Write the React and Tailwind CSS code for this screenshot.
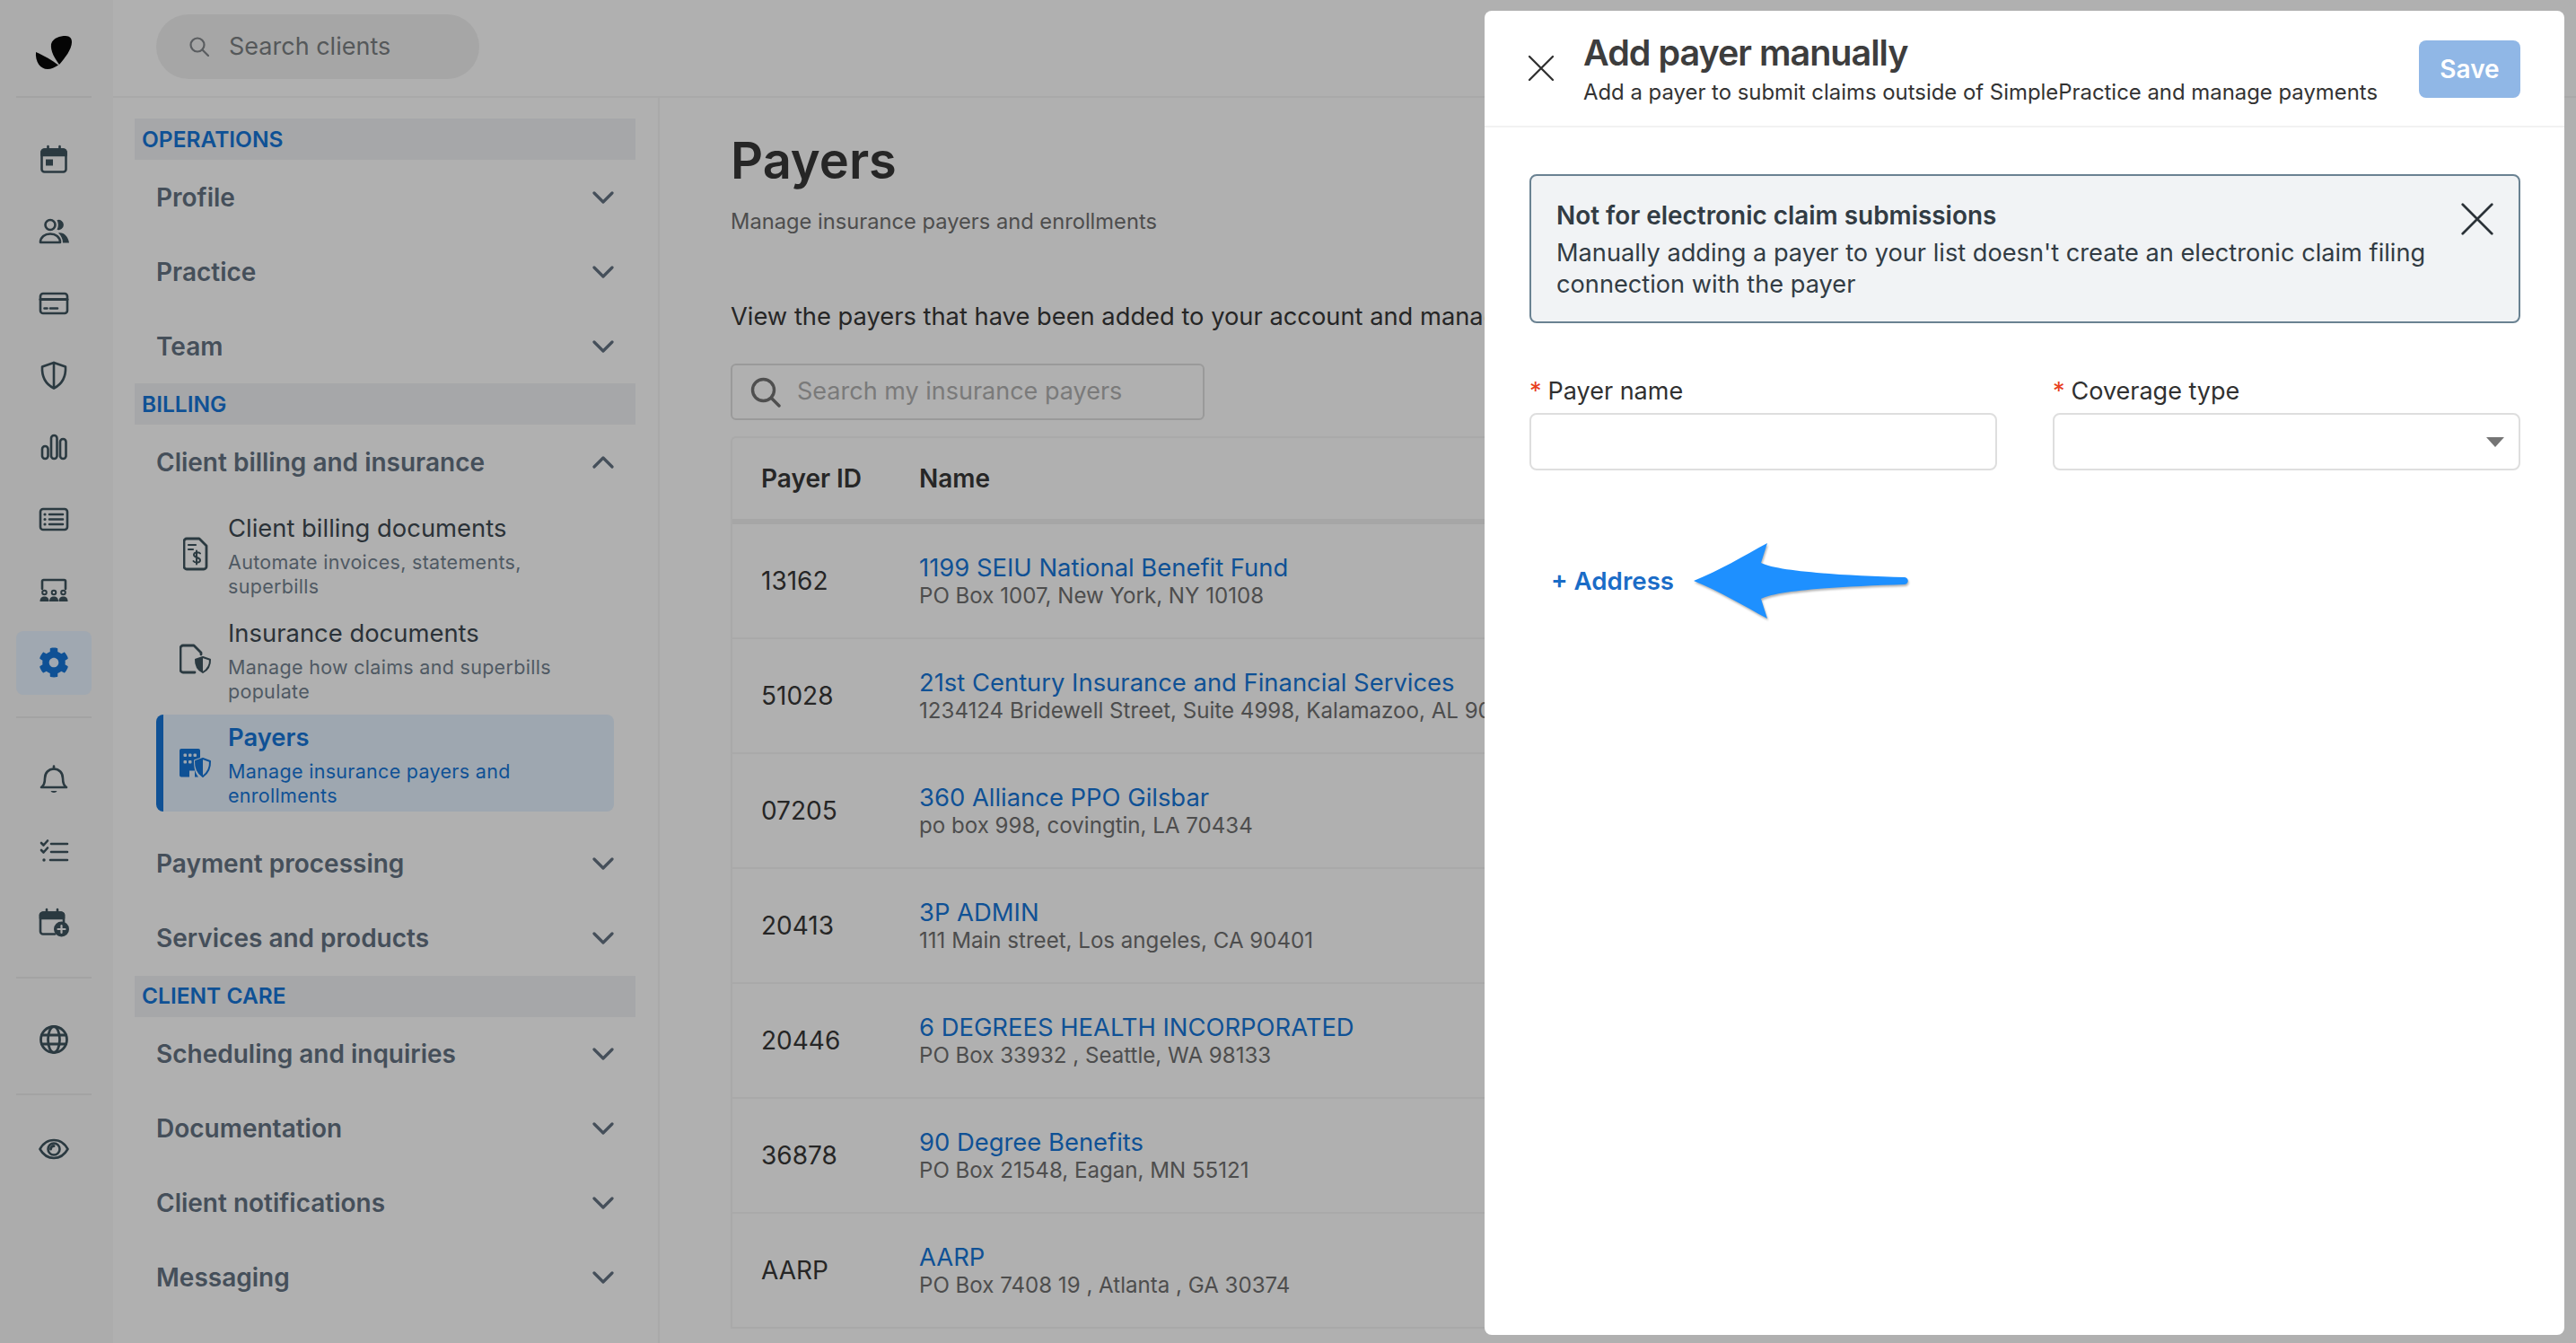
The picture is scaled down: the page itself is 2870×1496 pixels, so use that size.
import React from "react";
import { FaCog } from "react-icons/fa";

const ink = "#2b3a41";

function Chevron({ up }) {
  return (
    <svg width="24" height="16" viewBox="0 0 24 16" fill="none" stroke="#454f5a" strokeWidth="3.2" strokeLinecap="round" strokeLinejoin="round" className={up ? "rotate-180" : ""}>
      <path d="M2 3l10 10L22 3" />
    </svg>
  );
}

const iconProps = { width: 34, height: 34, viewBox: "0 0 34 34", fill: "none", stroke: ink, strokeWidth: 2.6, strokeLinecap: "round", strokeLinejoin: "round" };

const CalendarIcon = () => (
  <svg {...iconProps}>
    <rect x="3.500" y="5.500" width="27" height="25" rx="3" />
    <path d="M3.500 9a3 3 0 0 1 3-3.500h21a3 3 0 0 1 3 3.500v3h-27z" fill={ink} />
    <path d="M10.500 2v4M23.500 2v4" />
    <rect x="8" y="16.500" width="8" height="7" fill={ink} stroke="none" />
  </svg>
);
const ClientsIcon = () => (
  <svg {...iconProps}>
    <circle cx="13" cy="9.500" r="5.500" />
    <path d="M2 29c0-6 5-9.500 11-9.500S24 23 24 29z" />
    <path d="M20.500 4.200a5.600 5.600 0 1 1 0 10.600c1.800-3.300 1.800-7.300 0-10.600z" fill={ink} stroke="none" />
    <path d="M22 18.500c6-1 11 4 12 11h-7c0-4.500-2-8-5-11z" fill={ink} stroke="none" />
  </svg>
);
const CardIcon = () => (
  <svg {...iconProps}>
    <rect x="2" y="6" width="30" height="22" rx="3" />
    <path d="M2 12.500h30" strokeWidth="3" />
    <path d="M6.500 22.500h3M13 22.500h8" />
  </svg>
);
const ShieldIcon = () => (
  <svg {...iconProps}>
    <path d="M17 3l13 4.500c.5 10-3 19-13 24C7 26.500 3.500 17.500 4 7.500z" />
    <path d="M17 3v28" />
  </svg>
);
const ChartIcon = () => (
  <svg {...iconProps}>
    <rect x="4" y="16" width="6.500" height="14" rx="3.200" />
    <rect x="14" y="4" width="6.500" height="26" rx="3.200" />
    <rect x="24" y="8" width="6.500" height="22" rx="3.200" />
  </svg>
);
const ListIcon = () => (
  <svg {...iconProps}>
    <rect x="2" y="6" width="30" height="23" rx="3" />
    <path d="M12 12h15M12 17.500h15M12 23h15" />
    <path d="M7 12h.01M7 17.500h.01M7 23h.01" strokeWidth="3.200" />
  </svg>
);
const RoomIcon = () => (
  <svg {...iconProps}>
    <path d="M4 15V6.500a1.500 1.500 0 0 1 1.500-1.500h23A1.500 1.500 0 0 1 30 6.500V15" />
    <g strokeWidth="2">
      <circle cx="6.500" cy="19" r="2.300" />
      <circle cx="17" cy="19" r="2.300" />
      <circle cx="27.500" cy="19" r="2.300" />
    </g>
    <g fill={ink} stroke="none">
      <path d="M1.500 29c0-4 2-5.500 5-5.500s5 1.500 5 5.500z" />
      <path d="M12 29c0-4 2-5.500 5-5.500s5 1.500 5 5.500z" />
      <path d="M22.500 29c0-4 2-5.500 5-5.500s5 1.500 5 5.500z" />
    </g>
  </svg>
);
const BellIcon = () => (
  <svg {...iconProps}>
    <path d="M3 26c3-2 4-4.500 4-10 0-6 4-10.500 10-10.500S27 10 27 16c0 5.500 1 8 4 10z" />
    <path d="M17 2.500v3" />
    <path d="M13.500 30h7c-.8 2.500-6.200 2.500-7 0z" fill={ink} stroke="none" />
  </svg>
);
const TasksIcon = () => (
  <svg {...iconProps}>
    <path d="M3 8l2.500 2.500L10 5.500M3 16l2.500 2.500L10 13.500" />
    <path d="M14 9h18M14 18h18M13 27h19" />
    <path d="M6 27h.01" strokeWidth="3.400" />
  </svg>
);
const CalPlusIcon = () => (
  <svg {...iconProps}>
    <path d="M18 29.500H5a3 3 0 0 1-3-3V9a3 3 0 0 1 3-3.500h20a3 3 0 0 1 3 3.500v7" />
    <path d="M2 9a3 3 0 0 1 3-3.500h20a3 3 0 0 1 3 3.500v3H2z" fill={ink} />
    <path d="M9 2v4M21 2v4" />
    <circle cx="25.500" cy="24" r="8.500" fill={ink} stroke="none" />
    <path d="M25.500 20v8M21.500 24h8" stroke="#acacac" strokeWidth="2.200" />
  </svg>
);
const GlobeIcon = () => (
  <svg {...iconProps} strokeWidth="2.800">
    <circle cx="17" cy="17" r="14.500" />
    <ellipse cx="17" cy="17" rx="6.500" ry="14.500" />
    <path d="M3.500 12h27M3.500 22h27" />
  </svg>
);
const EyeIcon = () => (
  <svg {...iconProps}>
    <path d="M1.500 17C5.500 10 11 7 17 7s11.500 3 15.500 10c-4 7-9.500 10-15.500 10S5.500 24 1.500 17z" />
    <circle cx="17" cy="17" r="6.500" />
    <path d="M13.500 17a3.500 3.500 0 0 1 3.500-3.500" strokeWidth="3" />
  </svg>
);
const LogoIcon = () => (
  <svg width="42" height="39" viewBox="9 10 42 39" fill="#050505">
    <path d="M27 20C29 13 37 11 43 11C48 11 50 14 50 18C50 26 42 36 36 43C31 36 26 28 27 20Z" />
    <path d="M10 29C17 32 28 38 35 43.500C31 46 27 48 23 48C15 48 9 40 10 29Z" />
  </svg>
);
const DocDollarIcon = () => (
  <svg width="28" height="38" viewBox="0 0 28 38" fill="none" stroke={ink} strokeWidth="2.800" strokeLinecap="round" strokeLinejoin="round">
    <path d="M4 2h14l8 8v23a3 3 0 0 1-3 3H4a3 3 0 0 1-3-3V5a3 3 0 0 1 3-3z" />
    <path d="M6 9h8M6 14h5" strokeWidth="2.200" />
    <path d="M19 18.500c-1-1.500-7-2-7 1.500s7 2.500 7 6-6 3-7.500 1M15 15.500v15" strokeWidth="2" />
  </svg>
);
const DocShieldIcon = () => (
  <svg width="36" height="34" viewBox="0 0 36 34" fill="none" stroke={ink} strokeWidth="2.800" strokeLinecap="round" strokeLinejoin="round">
    <path d="M17 32H4a3 3 0 0 1-3-3V5a3 3 0 0 1 3-3h12l8 8v2" />
    <path d="M26 14l9 3c.3 7-2.500 12.500-9 16-6.500-3.500-9.300-9-9-16z" fill="#b0b0b0" stroke="none" />
    <path d="M26 15l8 2.700c.3 6.300-2.300 11-8 14.300-5.700-3.300-8.300-8-8-14.300z" strokeWidth="2" />
    <path d="M26 15v17c-5.700-3.300-8.300-8-8-14.300z" fill={ink} stroke="none" />
  </svg>
);
const BuildingShieldIcon = () => (
  <svg width="36" height="34" viewBox="0 0 36 34" fill="none">
    <path d="M2 1h19a2 2 0 0 1 2 2v8l-7 2.500c0 8 1 14 5 19h-4v-7h-6v7H2a2 2 0 0 1-2-2V3a2 2 0 0 1 2-2z" fill="#0f5195" />
    <g fill="#9ea7b0">
      <rect x="4.500" y="6.500" width="3.500" height="3.500" rx="1" />
      <rect x="10" y="6.500" width="3.500" height="3.500" rx="1" />
      <rect x="15.500" y="6.500" width="3.500" height="3.500" rx="1" />
      <rect x="4.500" y="14" width="3.500" height="3.500" rx="1" />
      <rect x="10" y="14" width="3.500" height="3.500" rx="1" />
    </g>
    <path d="M26 12l8 3c.3 7-2.300 13-8 17-5.700-4-8.300-10-8-17z" stroke="#0f5195" strokeWidth="2" strokeLinejoin="round" />
    <path d="M26 12v20c-5.700-4-8.300-10-8-17z" fill="#0f5195" />
  </svg>
);

function RailRow({ children, active }) {
  return (
    <div className="h-20 flex items-center justify-center">
      {active ? (
        <div className="w-[84px] h-[71px] rounded-lg bg-[#a0a8b1] flex items-center justify-center">{children}</div>
      ) : (
        children
      )}
    </div>
  );
}

function RailDivider({ className }) {
  return <div className={`mx-[18px] h-[2px] bg-[#a3a3a3] ${className}`} />;
}

function Rail() {
  return (
    <div className="w-[126px] shrink-0 h-full bg-[#acacac] pr-[6px]">
      <div className="mx-[18px] h-[109px] border-b-2 border-[#a3a3a3] flex items-center justify-center pt-[10px]">
        <LogoIcon />
      </div>
      <div className="pt-[29px]">
        <RailRow><CalendarIcon /></RailRow>
        <RailRow><ClientsIcon /></RailRow>
        <RailRow><CardIcon /></RailRow>
        <RailRow><ShieldIcon /></RailRow>
        <RailRow><ChartIcon /></RailRow>
        <RailRow><ListIcon /></RailRow>
        <RailRow><RoomIcon /></RailRow>
        <RailRow active><FaCog size={34} color="#0f5195" /></RailRow>
      </div>
      <RailDivider className="mt-5" />
      <div className="pt-7">
        <RailRow><BellIcon /></RailRow>
        <RailRow><TasksIcon /></RailRow>
        <RailRow><CalPlusIcon /></RailRow>
      </div>
      <RailDivider className="mt-5" />
      <div className="pt-7">
        <RailRow><GlobeIcon /></RailRow>
      </div>
      <RailDivider className="mt-5" />
      <div className="pt-5">
        <RailRow><EyeIcon /></RailRow>
      </div>
    </div>
  );
}

function Band({ children }) {
  return (
    <div className="h-[46px] bg-[#a6a7a9] pl-2 flex items-center text-[24.500px] font-semibold text-[#0f5195]">
      {children}
    </div>
  );
}

function NavRow({ label, up }) {
  return (
    <div className="h-[83px] pl-6 pr-6 flex items-center justify-between">
      <span className="text-[28px] font-semibold text-[#454f5a]">{label}</span>
      <Chevron up={up} />
    </div>
  );
}

function SubItem({ icon, title, desc, active }) {
  return (
    <div className={`ml-6 mr-6 h-[108px] flex items-center rounded-lg ${active ? "bg-[#9ea7b0] border-l-8 border-[#0f5195]" : "pl-2"}`}>
      <div className="w-[72px] shrink-0 flex justify-center pr-[2px] pl-[2px]">{icon}</div>
      <div className="flex-1 -mt-[4px]">
        <div className={`h-[50px] leading-[50px] text-[27.400px] ${active ? "font-semibold text-[#0f5195]" : "text-[#2b3238]"}`}>{title}</div>
        <div className={`text-[21.500px] leading-[27px] tracking-[0.3px] ${active ? "text-[#0f5195]" : "text-[#4f5963]"}`}>
          {desc}
        </div>
      </div>
    </div>
  );
}

function Sidebar() {
  return (
    <div className="w-[609px] shrink-0 border-r-2 border-[#a9a9a9] pt-[23px] pl-6 pr-[25px]">
      <Band>OPERATIONS</Band>
      <NavRow label="Profile" />
      <NavRow label="Practice" />
      <NavRow label="Team" />
      <Band>BILLING</Band>
      <NavRow label="Client billing and insurance" up />
      <div className="mt-[7px] flex flex-col gap-[8.500px]">
        <SubItem icon={<DocDollarIcon />} title="Client billing documents" desc={<>Automate invoices, statements,<br />superbills</>} />
        <SubItem icon={<DocShieldIcon />} title="Insurance documents" desc={<>Manage how claims and superbills<br />populate</>} />
        <SubItem active icon={<BuildingShieldIcon />} title="Payers" desc={<>Manage insurance payers and<br />enrollments</>} />
      </div>
      <div className="mt-[16.500px]">
        <NavRow label="Payment processing" />
        <NavRow label="Services and products" />
      </div>
      <Band>CLIENT CARE</Band>
      <NavRow label="Scheduling and inquiries" />
      <NavRow label="Documentation" />
      <NavRow label="Client notifications" />
      <NavRow label="Messaging" />
    </div>
  );
}

const rows = [
  ["13162", "1199 SEIU National Benefit Fund", "PO Box 1007, New York, NY 10108"],
  ["51028", "21st Century Insurance and Financial Services", "1234124 Bridewell Street, Suite 4998, Kalamazoo, AL 90210"],
  ["07205", "360 Alliance PPO Gilsbar", "po box 998, covingtin, LA 70434"],
  ["20413", "3P ADMIN", "111 Main street, Los angeles, CA 90401"],
  ["20446", "6 DEGREES HEALTH INCORPORATED", "PO Box 33932 , Seattle, WA 98133"],
  ["36878", "90 Degree Benefits", "PO Box 21548, Eagan, MN 55121"],
  ["AARP", "AARP", "PO Box 7408 19 , Atlanta , GA 30374"],
];

function Main() {
  return (
    <div className="flex-1 min-w-0 pl-[79px] overflow-hidden">
      <h1 className="mt-[35px] h-[70px] leading-[70px] text-[56px] font-semibold text-[#262626]">Payers</h1>
      <p className="mt-[15px] h-[36px] leading-[36px] text-[23.700px] text-[#4d4d4d]">Manage insurance payers and enrollments</p>
      <p className="mt-[70px] h-[36px] leading-[36px] text-[27.300px] text-[#262626] whitespace-nowrap">
        View the payers that have been added to your account and manage their enrollments.
      </p>
      <div className="mt-[34px] w-[528px] h-[63px] rounded-md border-2 border-[#9a9a9a] flex items-center pl-[20px] gap-[18px]">
        <svg width="34" height="34" viewBox="0 0 34 34" fill="none" stroke="#4f4f4f" strokeWidth="3.400" strokeLinecap="round">
          <circle cx="14.500" cy="14.500" r="12" />
          <path d="M23.500 23.500L32 32" />
        </svg>
        <span className="text-[27px] text-[#7a7a7a]">Search my insurance payers</span>
      </div>
      <div className="mt-[18px] w-[1900px] border-l-2 border-t-2 border-[#a9a9a9] rounded-tl-md">
        <div className="h-[96px] border-b-[6px] border-[#a6a6a6] flex items-center text-[28px] font-semibold text-[#262626]">
          <div className="w-[208px] pl-[32px]">Payer ID</div>
          <div>Name</div>
        </div>
        {rows.map((r) => (
          <div key={r[0]} className="h-[128px] border-b-2 border-[#a9a9a9] flex items-center">
            <div className="w-[208px] pl-[32px] text-[28px] text-[#262626]">{r[0]}</div>
            <div className="flex flex-col">
              <span className="text-[27.400px] leading-[32px] text-[#0f5195]">{r[1]}</span>
              <span className="text-[24.100px] leading-[31px] text-[#4d4d4d]">{r[2]}</span>
            </div>
          </div>
        ))}
      </div>
    </div>
  );
}

function CloseX({ size, color, width }) {
  return (
    <svg width={size} height={size} viewBox="0 0 32 32" fill="none" stroke={color} strokeWidth={width} strokeLinecap="round">
      <path d="M3 3l26 26M29 3L3 29" />
    </svg>
  );
}

function Field({ label, select }) {
  return (
    <div>
      <div className="h-[36px] flex items-center text-[27px] text-[#303030]">
        <span className="text-[#e8401c] w-[20.500px]">*</span>
        <span>{label}</span>
      </div>
      <div className="relative mt-[6px] h-[64px] rounded-lg border-2 border-[#dedede] bg-white">
        {select && (
          <svg width="20" height="11" viewBox="0 0 20 11" className="absolute right-[16px] top-[25px]">
            <path d="M0 0h20L10 11z" fill="#757575" />
          </svg>
        )}
      </div>
    </div>
  );
}

function Panel() {
  return (
    <div className="absolute left-[1654px] top-3 w-[1203px] h-[1475px] bg-white rounded-lg">
      <div className="h-[130px] border-b-2 border-[#f2f2f2] pl-[47px] pr-[49px] flex items-center">
        <CloseX size={32} color="#303030" width="2.300" />
        <div className="ml-[31px] flex-1">
          <div className="text-[39.500px] leading-[50px] font-semibold tracking-[-1px] text-[#3d3d3d]">Add payer manually</div>
          <div className="mt-[3px] text-[23.900px] leading-[32px] text-[#333333]">Add a payer to submit claims outside of SimplePractice and manage payments</div>
        </div>
        <button className="w-[113px] h-[64px] mt-[2px] rounded-lg bg-[#90b7e6] text-white text-[28px] font-semibold">Save</button>
      </div>
      <div className="pl-[50px] pr-[49px]">
        <div className="relative mt-[52px] h-[166px] rounded-lg border-2 border-[#6a8292] bg-[#f1f3f5] pl-[28px] pt-[26px] text-[#323c44]">
          <div className="text-[27.900px] leading-[36px] font-semibold">Not for electronic claim submissions</div>
          <div className="text-[27.200px] leading-[35px] mt-[6px] w-[1000px]">
            Manually adding a payer to your list doesn't create an electronic claim filing connection with the payer
          </div>
          <div className="absolute right-[26px] top-[28px]">
            <CloseX size={40} color="#2b3238" width="2.200" />
          </div>
        </div>
        <div className="mt-[58px] grid grid-cols-2 gap-[62px]">
          <Field label="Payer name" />
          <Field label="Coverage type" select />
        </div>
        <div className="mt-[105px] pl-[24px] h-[36px] leading-[36px] text-[27.700px] font-semibold text-[#1a6cc7]">+ Address</div>
      </div>
      <svg width="240" height="86" viewBox="0 0 240 86" className="absolute left-[233px] top-[593px] drop-shadow-[1px_2px_1px_rgba(0,0,0,0.3)]">
        <path d="M0 42C28 31 56 14 82 0L75 22C95 32 170 36 235 38C240 39 240 45 235 46C170 48 95 52 75 62L82 84C56 70 28 53 0 42Z" fill="#1e90ff" />
      </svg>
    </div>
  );
}

export default function App() {
  return (
    <div className="relative w-[2870px] h-[1496px] overflow-hidden bg-[#b0b0b0] flex font-['Inter',sans-serif]">
      <Rail />
      <div className="flex-1 min-w-0 flex flex-col">
        <div className="h-[109px] shrink-0 border-b-2 border-[#a9a9a9] flex items-start pl-12 pt-4">
          <div className="w-[360px] h-[72px] rounded-full bg-[#a6a6a6] flex items-center pl-[37px] gap-[22px]">
            <svg width="22" height="22" viewBox="0 0 22 22" fill="none" stroke="#5a5d60" strokeWidth="2.200" strokeLinecap="round">
              <circle cx="9" cy="9" r="7.500" />
              <path d="M14.500 14.500L21 21" />
            </svg>
            <span className="text-[27px] text-[#55585a]">Search clients</span>
          </div>
        </div>
        <div className="flex-1 min-h-0 flex">
          <Sidebar />
          <Main />
        </div>
      </div>
      <Panel />
    </div>
  );
}
